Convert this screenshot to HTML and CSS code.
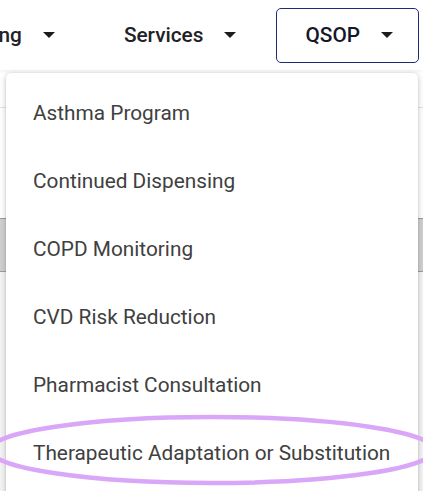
FILE: index.html
```html
<!DOCTYPE html>
<html>
<head>
<meta charset="utf-8">
<link rel="stylesheet" href="styles.css">
</head>
<body>
<header class="header">
  <nav class="nav">
    <div class="nav-item"><span>Reporting</span><svg class="caret" viewBox="0 0 10 5"><path d="M0 0h10L5 5z"/></svg></div>
    <div class="nav-item"><span>Services</span><svg class="caret" viewBox="0 0 10 5"><path d="M0 0h10L5 5z"/></svg></div>
    <div class="nav-item active"><span>QSOP</span><svg class="caret" viewBox="0 0 10 5"><path d="M0 0h10L5 5z"/></svg></div>
  </nav>
</header>
<main class="content">
  <div class="toolbar"></div>
  <div class="spacer"></div>
  <div class="table-head"></div>
  <div class="table-body"></div>
</main>
<ul class="menu">
  <li>Asthma Program</li>
  <li>Continued Dispensing</li>
  <li>COPD Monitoring</li>
  <li>CVD Risk Reduction</li>
  <li>Pharmacist Consultation</li>
  <li>Therapeutic Adaptation or Substitution</li>
</ul>
<svg class="highlight" width="423" height="491" viewBox="0 0 423 491"><ellipse cx="212" cy="450" rx="222" ry="33" fill="none" stroke="#daa6f8" stroke-width="4.5"/></svg>
</body>
</html>
```
FILE: styles.css
```css
html, body {
  margin: 0;
  padding: 0;
  width: 423px;
  height: 491px;
  overflow: hidden;
  background: #ffffff;
  font-family: Roboto, "Noto Sans", sans-serif;
}
.header {
  height: 70px;
  display: flex;
  justify-content: flex-end;
  align-items: center;
  padding-right: 4px;
  background: #fff;
  box-shadow: 0 1px 4px rgba(0,0,0,0.08);
  position: relative;
}
.nav {
  display: flex;
  justify-content: flex-end;
  gap: 14px;
}
.nav-item {
  flex-shrink: 0;
  display: flex;
  align-items: center;
  gap: 21px;
  height: 53px;
  padding: 0 25px 0 28px;
  border: 1px solid transparent;
  border-radius: 5px;
  font-size: 20.8px;
  font-weight: 500;
  color: #222226;
}
.nav-item.active {
  border-color: #1f2b78;
  color: #15172a;
}
.caret {
  width: 12px;
  height: 6px;
  fill: #1c1c1c;
}
.content {
  display: flex;
  flex-direction: column;
}
.toolbar {
  height: 37px;
  border-bottom: 1px solid #e3e3e3;
}
.spacer {
  height: 110px;
}
.table-head {
  height: 52px;
  background: #d0d0d0;
  border-top: 1px solid #9c9c9c;
  border-bottom: 1px solid #9c9c9c;
}
.table-body {
  height: 240px;
  background: #f4f4f4;
}
.menu {
  position: absolute;
  left: 6px;
  top: 73px;
  width: 412px;
  height: 440px;
  margin: 0;
  padding: 6px 0 0;
  list-style: none;
  background: #fff;
  border-radius: 5px;
  box-shadow: 0 2px 6px rgba(0,0,0,0.22), 0 0 2px rgba(0,0,0,0.12);
  box-sizing: border-box;
}
.menu li {
  height: 68px;
  display: flex;
  align-items: center;
  padding-left: 27px;
  font-size: 20.8px;
  color: #404040;
  white-space: nowrap;
}
.highlight {
  position: absolute;
  left: 0;
  top: 0;
  pointer-events: none;
}
```
